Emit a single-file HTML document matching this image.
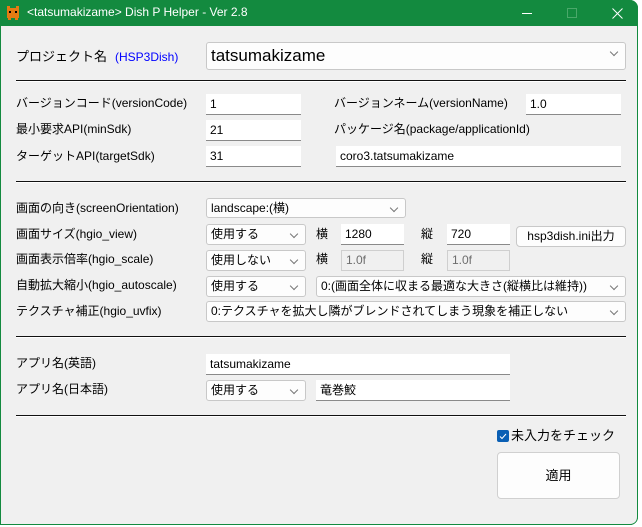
<!DOCTYPE html>
<html><head><meta charset="utf-8"><style>
*{box-sizing:border-box;margin:0;padding:0}
body{width:642px;height:527px;background:#fff;position:relative;overflow:hidden;font-family:"Liberation Sans","Noto Sans CJK JP",sans-serif;font-size:12px;color:#000}
.win{position:absolute;left:0;top:0;width:638px;height:525px;background:#f0f0f0;box-shadow:inset 1px 0 0 #138a3f,inset -1px 0 0 #138a3f,inset 0 -1px 0 #138a3f;border-radius:0 8px 8px 0}
.title{position:absolute;left:0;top:0;width:638px;height:26px;background:#138a3f;color:#fff;font-size:12px;border-radius:0 8px 0 0}
.a{position:absolute;white-space:nowrap}
.lbl{position:absolute;white-space:nowrap;line-height:14px}
.in{position:absolute;background:#fff;border-bottom:1px solid #8a8a8a;padding-left:4px;line-height:20px;height:21px;white-space:nowrap}
.dis{position:absolute;background:#f0f0f0;border:1px solid #cfcfcf;padding-left:4px;line-height:18px;height:21px;color:#6d6d6d}
.sel{position:absolute;background:#fdfdfd;border:1px solid #c8c8c8;border-radius:3px;padding-left:4px;line-height:19px;height:21px;white-space:nowrap}
.sel:after{content:"";position:absolute;right:8px;top:6px;width:5px;height:5px;border-right:1px solid #777;border-bottom:1px solid #777;transform:rotate(45deg)}
.sel.nb:after{display:none}
.hr{position:absolute;left:16px;width:610px;height:2px;background:#111;border-bottom:1px solid #fff}
</style></head><body>
<div class="win">
<div class="title">
 <svg class="a" style="left:5px;top:5px" width="16" height="16"><rect x="2" y="3" width="12" height="10" fill="#e57b13"/><rect x="2" y="1" width="3" height="3" fill="#e57b13"/><rect x="11" y="1" width="3" height="3" fill="#e57b13"/><rect x="4" y="6" width="2" height="2" fill="#000"/><rect x="10" y="6" width="2" height="2" fill="#000"/><rect x="3" y="13" width="3" height="2" fill="#e57b13"/><rect x="10" y="13" width="3" height="2" fill="#e57b13"/></svg>
 <span class="a" style="left:27px;top:5px">&lt;tatsumakizame&gt; Dish P Helper - Ver 2.8</span>
 <div class="a" style="left:522px;top:13px;width:10px;height:1px;background:#fff"></div>
 <div class="a" style="left:567px;top:8px;width:10px;height:10px;border:1px solid #4aa86a"></div>
 <svg class="a" style="left:612px;top:8px" width="11" height="11"><path d="M0.5 0.5 L10.5 10.5 M10.5 0.5 L0.5 10.5" stroke="#fff" stroke-width="1"/></svg>
</div>
<div class="lbl" style="left:16px;top:50px;font-size:13px">プロジェクト名</div>
<div class="lbl" style="left:115px;top:50px;color:#0000ff">(HSP3Dish)</div>
<div class="sel" style="left:206px;top:42px;width:420px;height:28px;font-size:17px;line-height:26px">tatsumakizame</div>
<div class="hr" style="top:80px"></div>

<div class="lbl" style="left:16px;top:96px">バージョンコード(versionCode)</div>
<div class="in" style="left:206px;top:94px;width:95px">1</div>
<div class="lbl" style="left:334px;top:96px">バージョンネーム(versionName)</div>
<div class="in" style="left:526px;top:94px;width:95px">1.0</div>
<div class="lbl" style="left:16px;top:122px">最小要求API(minSdk)</div>
<div class="in" style="left:206px;top:120px;width:95px">21</div>
<div class="lbl" style="left:334px;top:122px">パッケージ名(package/applicationId)</div>
<div class="lbl" style="left:16px;top:149px">ターゲットAPI(targetSdk)</div>
<div class="in" style="left:206px;top:146px;width:95px">31</div>
<div class="in" style="left:336px;top:146px;width:285px">coro3.tatsumakizame</div>
<div class="hr" style="top:181px"></div>

<div class="lbl" style="left:16px;top:201px">画面の向き(screenOrientation)</div>
<div class="sel" style="left:206px;top:198px;width:200px;height:20px;line-height:18px">landscape:(横)</div>
<div class="lbl" style="left:16px;top:227px">画面サイズ(hgio_view)</div>
<div class="sel" style="left:206px;top:224px;width:100px">使用する</div>
<div class="lbl" style="left:316px;top:227px">横</div>
<div class="in" style="left:341px;top:224px;width:63px">1280</div>
<div class="lbl" style="left:421px;top:227px">縦</div>
<div class="in" style="left:447px;top:224px;width:63px">720</div>
<div class="sel nb" style="left:516px;top:226px;width:110px;border-radius:4px;text-align:center;padding:0">hsp3dish.ini出力</div>
<div class="lbl" style="left:16px;top:252px">画面表示倍率(hgio_scale)</div>
<div class="sel" style="left:206px;top:250px;width:100px">使用しない</div>
<div class="lbl" style="left:316px;top:252px">横</div>
<div class="dis" style="left:341px;top:250px;width:63px">1.0f</div>
<div class="lbl" style="left:421px;top:252px">縦</div>
<div class="dis" style="left:447px;top:250px;width:63px">1.0f</div>
<div class="lbl" style="left:16px;top:278px">自動拡大縮小(hgio_autoscale)</div>
<div class="sel" style="left:206px;top:276px;width:100px">使用する</div>
<div class="sel" style="left:316px;top:276px;width:310px">0:(画面全体に収まる最適な大きさ(縦横比は維持))</div>
<div class="lbl" style="left:16px;top:304px">テクスチャ補正(hgio_uvfix)</div>
<div class="sel" style="left:206px;top:301px;width:420px">0:テクスチャを拡大し隣がブレンドされてしまう現象を補正しない</div>
<div class="hr" style="top:336px"></div>

<div class="lbl" style="left:16px;top:356px">アプリ名(英語)</div>
<div class="in" style="left:206px;top:354px;width:304px">tatsumakizame</div>
<div class="lbl" style="left:16px;top:382px">アプリ名(日本語)</div>
<div class="sel" style="left:206px;top:380px;width:100px">使用する</div>
<div class="in" style="left:316px;top:380px;width:194px">竜巻鮫</div>
<div class="hr" style="top:415px"></div>

<div class="a" style="left:497px;top:430px;width:12px;height:12px;background:#0a5fb4;border-radius:2px"><svg width="12" height="12" style="position:absolute;left:0;top:0"><path d="M3 6.5 L5 8.5 L9 4" stroke="#fff" stroke-width="1" fill="none"/></svg></div>
<div class="lbl" style="left:511px;top:429px;font-size:13px">未入力をチェック</div>
<div class="a" style="left:497px;top:452px;width:123px;height:47px;background:#fdfdfd;border:1px solid #d0d0d0;border-radius:4px;text-align:center;line-height:45px;font-size:13px">適用</div>
</div>
</body></html>
